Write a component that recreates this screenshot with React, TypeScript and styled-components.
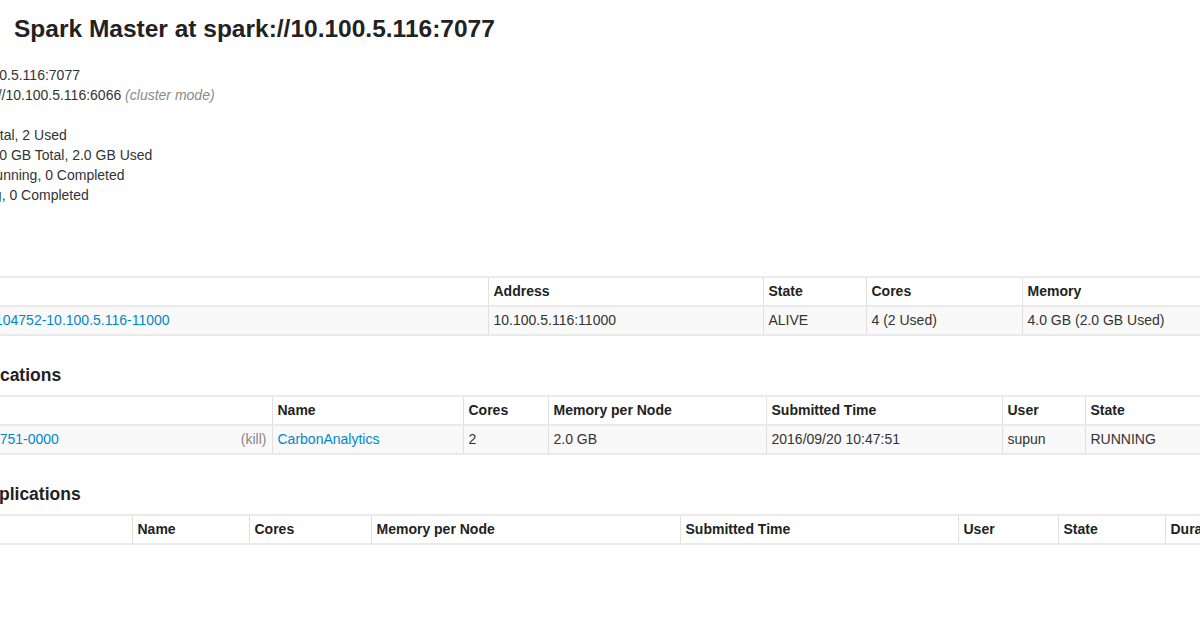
import React from "react";
import styled, { createGlobalStyle } from "styled-components";

const GlobalStyle = createGlobalStyle`
  html, body {
    margin: 0;
    padding: 0;
    background: #ffffff;
    overflow: hidden;
  }
  body {
    font-family: "Liberation Sans", Arial, Helvetica, sans-serif;
    font-size: 14px;
    line-height: 20px;
    color: #333333;
  }
`;

const Page = styled.div`
  width: 1423px;
  margin-left: -119px;
`;

const Section = styled.section`
  display: flow-root;
`;

const Title = styled.h3`
  margin: 9px 0 16px;
  padding-left: 133px;
  font-size: 24.5px;
  line-height: 40px;
  font-weight: bold;
  color: #222222;
`;

const InfoList = styled.ul`
  list-style: none;
  margin: 0 0 10px 0;
  padding: 0;
`;

const InfoItem = styled.li`
  line-height: 20px;
  white-space: nowrap;
`;

const Muted = styled.span`
  color: #8a8a8a;
  font-style: italic;
`;

const SectionTitle = styled.h4<{ $top: number }>`
  margin: ${(p) => p.$top}px 0 10px;
  font-size: 17.5px;
  line-height: 20px;
  font-weight: bold;
  color: #222222;
`;

const Table = styled.table`
  width: 100%;
  table-layout: fixed;
  border-collapse: collapse;
  margin-bottom: 20px;
  border-top: 2px solid #eaeaea;
  border-bottom: 2px solid #eaeaea;
`;

const HeadCell = styled.th`
  text-align: left;
  font-weight: bold;
  color: #222222;
  padding: 4px 5px;
  line-height: 19px;
  border-left: 1px solid #e0e0e0;
  border-bottom: 2px solid #eaeaea;
  white-space: nowrap;
  overflow: hidden;
  &:first-child {
    border-left: 0;
  }
`;

const BodyRow = styled.tr`
  &:nth-child(odd) td {
    background: #f9f9f9;
  }
`;

const Cell = styled.td`
  padding: 4px 5px;
  line-height: 19px;
  border-left: 1px solid #e0e0e0;
  white-space: nowrap;
  overflow: hidden;
  &:first-child {
    border-left: 0;
  }
`;

const Link = styled.a`
  color: #0088cc;
  text-decoration: none;
`;

const KillLink = styled.a`
  float: right;
  color: #888888;
  text-decoration: none;
`;

type Column = { label: string; width?: number };

const TableHead: React.FC<{ columns: Column[] }> = ({ columns }) => (
  <>
    <colgroup>
      {columns.map((c) => (
        <col key={c.label} style={c.width ? { width: c.width } : undefined} />
      ))}
    </colgroup>
    <thead>
      <tr>
        {columns.map((c) => (
          <HeadCell key={c.label}>{c.label}</HeadCell>
        ))}
      </tr>
    </thead>
  </>
);

const workerColumns: Column[] = [
  { label: "Worker Id", width: 607 },
  { label: "Address", width: 275 },
  { label: "State", width: 103 },
  { label: "Cores", width: 156 },
  { label: "Memory" },
];

const runningColumns: Column[] = [
  { label: "Application ID", width: 391 },
  { label: "Name", width: 191 },
  { label: "Cores", width: 85 },
  { label: "Memory per Node", width: 218 },
  { label: "Submitted Time", width: 236 },
  { label: "User", width: 83 },
  { label: "State", width: 124 },
  { label: "Duration" },
];

const completedColumns: Column[] = [
  { label: "Application ID", width: 251 },
  { label: "Name", width: 117 },
  { label: "Cores", width: 122 },
  { label: "Memory per Node", width: 309 },
  { label: "Submitted Time", width: 278 },
  { label: "User", width: 100 },
  { label: "State", width: 107 },
  { label: "Duration" },
];

export default function App() {
  return (
    <>
      <GlobalStyle />
      <Page>
        <Section>
          <Title>Spark Master at spark://10.100.5.116:7077</Title>
        </Section>

        <Section>
          <InfoList>
            <InfoItem>
              <strong>URL:</strong> spark://10.100.5.116:7077
            </InfoItem>
            <InfoItem>
              <strong>REST URL:</strong> spark://10.100.5.116:6066{" "}
              <Muted>(cluster mode)</Muted>
            </InfoItem>
            <InfoItem>
              <strong>Alive Workers:</strong> 1
            </InfoItem>
            <InfoItem>
              <strong>Cores in use:</strong> 4 Total, 2 Used
            </InfoItem>
            <InfoItem>
              <strong>Memory in use:</strong> 4.0 GB Total, 2.0 GB Used
            </InfoItem>
            <InfoItem>
              <strong>Applications:</strong> 1 Running, 0 Completed
            </InfoItem>
            <InfoItem>
              <strong>Drivers:</strong> 0 Running, 0 Completed
            </InfoItem>
            <InfoItem>
              <strong>Status:</strong> ALIVE
            </InfoItem>
          </InfoList>
        </Section>

        <Section>
          <SectionTitle $top={11}>Workers</SectionTitle>
          <Table>
            <TableHead columns={workerColumns} />
            <tbody>
              <BodyRow>
                <Cell>
                  <Link href="#">worker-20160920104752-10.100.5.116-11000</Link>
                </Cell>
                <Cell>10.100.5.116:11000</Cell>
                <Cell>ALIVE</Cell>
                <Cell>4 (2 Used)</Cell>
                <Cell>4.0 GB (2.0 GB Used)</Cell>
              </BodyRow>
            </tbody>
          </Table>
        </Section>

        <Section>
          <SectionTitle $top={9}>Running Applications</SectionTitle>
          <Table>
            <TableHead columns={runningColumns} />
            <tbody>
              <BodyRow>
                <Cell>
                  <KillLink href="#">(kill)</KillLink>
                  <Link href="#">app-20160920104751-0000</Link>
                </Cell>
                <Cell>
                  <Link href="#">CarbonAnalytics</Link>
                </Cell>
                <Cell>2</Cell>
                <Cell>2.0 GB</Cell>
                <Cell>2016/09/20 10:47:51</Cell>
                <Cell>supun</Cell>
                <Cell>RUNNING</Cell>
                <Cell>2.1 min</Cell>
              </BodyRow>
            </tbody>
          </Table>
        </Section>

        <Section>
          <SectionTitle $top={9}>Completed Applications</SectionTitle>
          <Table>
            <TableHead columns={completedColumns} />
            <tbody />
          </Table>
        </Section>
      </Page>
    </>
  );
}
